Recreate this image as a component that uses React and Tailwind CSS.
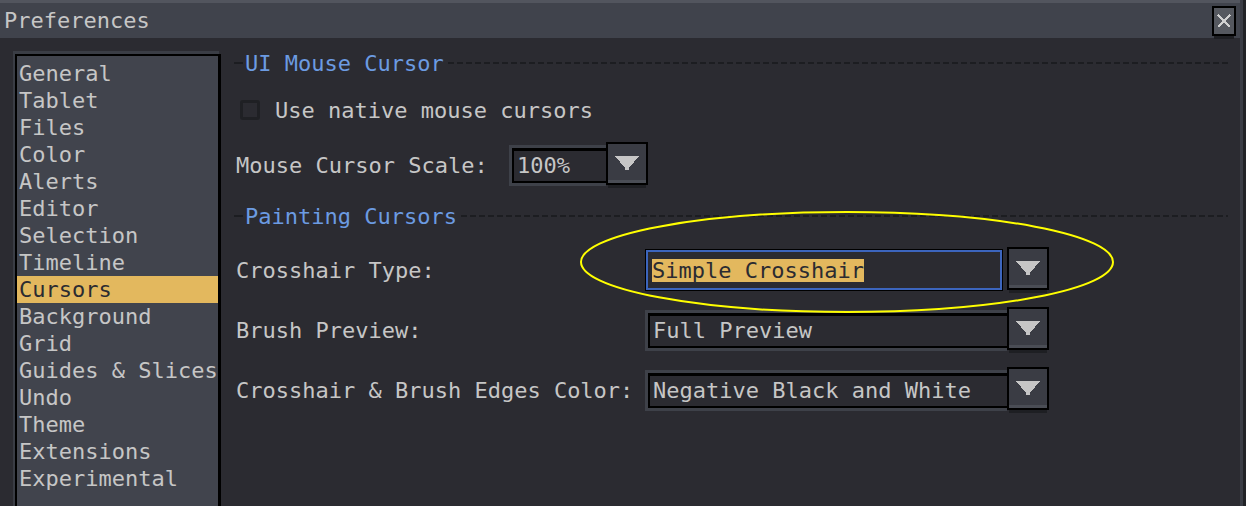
import React from 'react'

const items = [
  'General', 'Tablet', 'Files', 'Color', 'Alerts', 'Editor', 'Selection', 'Timeline',
  'Cursors', 'Background', 'Grid', 'Guides & Slices', 'Undo', 'Theme', 'Extensions', 'Experimental',
]

function Arrow() {
  return (
    <svg width="24" height="14" viewBox="0 0 24 14" shapeRendering="crispEdges">
      <polygon points="0,0 24,0 14,12 14,14 10,14 10,12" fill="#c6c6c6" />
    </svg>
  )
}

function DropButton() {
  return (
    <div className="flex flex-col">
      <div className="w-[42px] h-[43px] border-2 border-black bg-[#1d1e22] flex">
        <div className="flex-1 bg-[#3a3c44] border-b-[3px] border-[#4a4d55] flex items-center justify-center pt-[2px]">
          <Arrow />
        </div>
      </div>
      <div className="h-[3px] mx-[2px] bg-[#1e1f23]" />
    </div>
  )
}

function Field({ text, width }) {
  return (
    <div className={`h-[41px] ${width} border-t-[3px] border-l-[3px] border-b-[3px] border-[#3e4149] flex`}>
      <div className="flex-1 border-t-[3px] border-l-[2px] border-b-[2px] border-black bg-[#2b2b31] flex items-center pl-[3px] text-[#c6c6c6]">
        {text}
      </div>
    </div>
  )
}

function Header({ children }) {
  return (
    <div className="h-[22px] flex items-center">
      <div className="w-[9px] h-[2px] bg-[#1c1d21]" />
      <span className="px-[2px] text-[#6c9be2]">{children}</span>
      <div className="flex-1 h-[2px] ml-[2px] bg-[repeating-linear-gradient(90deg,#1c1d21_0_6px,transparent_6px_9px)]" />
    </div>
  )
}

export default function App() {
  return (
    <div className="relative w-[1246px] h-[506px] overflow-hidden bg-[#2b2b31] flex font-['DejaVu_Sans_Mono',monospace] text-[22px] leading-[27px] text-[#c6c6c6]">
      <div className="w-[1240px] flex flex-col">
        <div className="h-[3px] bg-[#52555e]" />
        <div className="h-[35px] bg-[#40434c] flex items-center justify-between pl-[4px] pr-[4px]">
          <span className="text-[#c6c6c6]">Preferences</span>
          <div className="flex flex-col mt-[3px]">
            <div className="w-[24px] h-[30px] border-2 border-black bg-[#55585f] flex items-center justify-center">
              <svg width="14" height="14" viewBox="0 0 14 14" shapeRendering="crispEdges">
                <path d="M1 1 L13 13 M13 1 L1 13" stroke="#d0d0d0" strokeWidth="2.4" />
              </svg>
            </div>
            <div className="h-[3px] mx-[2px] bg-[#1e1f23]" />
          </div>
        </div>
        <div className="flex-1 flex">
          <div className="ml-[13px] mt-[13px] w-[206px] border-t-[3px] border-l-2 border-r-[3px] border-[#3a3d45] flex">
            <div className="flex-1 border-t-2 border-l-2 border-r-[3px] border-black bg-[#41444d] pt-[4px]">
              {items.map((it) => (
                <div
                  key={it}
                  className={`h-[27px] pl-[2px] whitespace-pre ${it === 'Cursors' ? 'bg-[#e3b85e] text-[#2b2b31]' : ''}`}
                >
                  {it}
                </div>
              ))}
            </div>
          </div>
          <div className="ml-[15px] mr-[12px] flex-1 flex flex-col">
            <div className="mt-[14px]">
              <Header>UI Mouse Cursor</Header>
            </div>
            <div className="mt-[22px] h-[28px] flex items-center">
              <div className="ml-[6px] w-[20px] h-[20px] border-[3px] border-[#1f2024] rounded-[3px]" />
              <span className="ml-[15px]">Use native mouse cursors</span>
            </div>
            <div className="mt-[19px] h-[44px] flex items-center">
              <span className="ml-[2px] w-[273px]">Mouse Cursor Scale:</span>
              <Field text="100%" width="w-[97px]" />
              <DropButton />
            </div>
            <div className="mt-[18px]">
              <Header>Painting Cursors</Header>
            </div>
            <div className="mt-[21px] h-[44px] flex items-center">
              <span className="ml-[2px] w-[409px]">Crosshair Type:</span>
              <div className="h-[42px] w-[358px] border border-black flex">
                <div className="flex-1 border-2 border-[#3c65bd] bg-[#2b2b31] flex items-center pl-[4px]">
                  <span className="bg-[#e3b85e] text-[#2b2b31] h-[23px] leading-[23px] whitespace-pre">Simple Crosshair</span>
                </div>
              </div>
              <div className="ml-[4px]">
                <DropButton />
              </div>
            </div>
            <div className="mt-[15px] h-[46px] flex items-center">
              <span className="ml-[2px] w-[409px]">Brush Preview:</span>
              <Field text="Full Preview" width="w-[362px]" />
              <DropButton />
            </div>
            <div className="mt-[14px] h-[46px] flex items-center">
              <span className="ml-[2px] w-[409px] whitespace-pre">Crosshair &amp; Brush Edges Color:</span>
              <Field text="Negative Black and White" width="w-[362px]" />
              <DropButton />
            </div>
          </div>
        </div>
      </div>
      <div className="w-[3px] bg-[#3a3d45]" />
      <div className="w-[3px] bg-[#222327]" />
      <svg className="absolute left-0 top-0 pointer-events-none" width="1246" height="506">
        <ellipse cx="847" cy="262" rx="266" ry="50" fill="none" stroke="#ffff00" strokeWidth="2" />
      </svg>
    </div>
  )
}
